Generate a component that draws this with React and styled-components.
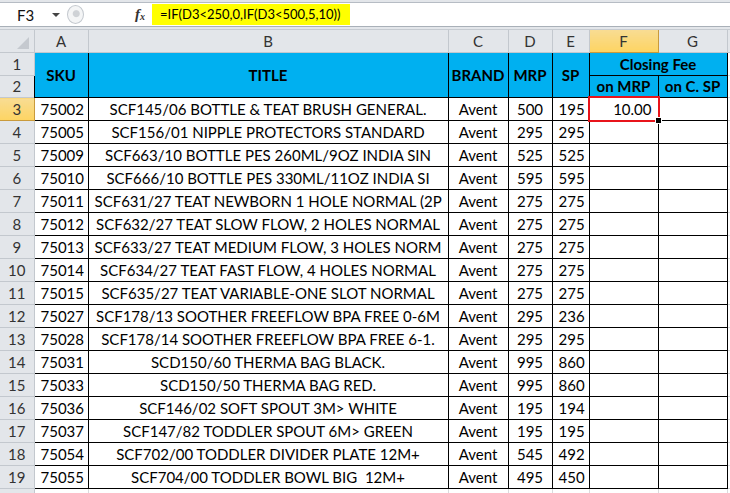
import styled, { createGlobalStyle } from "styled-components"

const rows = [
  [3, "75002", "SCF145/06 BOTTLE & TEAT BRUSH GENERAL.", "500", "195", "10.00"],
  [4, "75005", "SCF156/01 NIPPLE PROTECTORS STANDARD", "295", "295"],
  [5, "75009", "SCF663/10 BOTTLE PES 260ML/9OZ INDIA SIN", "525", "525"],
  [6, "75010", "SCF666/10 BOTTLE PES 330ML/11OZ INDIA SI", "595", "595"],
  [7, "75011", "SCF631/27 TEAT NEWBORN 1 HOLE NORMAL (2P", "275", "275"],
  [8, "75012", "SCF632/27 TEAT SLOW FLOW, 2 HOLES NORMAL", "275", "275"],
  [9, "75013", "SCF633/27 TEAT MEDIUM FLOW, 3 HOLES NORM", "275", "275"],
  [10, "75014", "SCF634/27 TEAT FAST FLOW, 4 HOLES NORMAL", "275", "275"],
  [11, "75015", "SCF635/27 TEAT VARIABLE-ONE SLOT NORMAL", "275", "275"],
  [12, "75027", "SCF178/13 SOOTHER FREEFLOW BPA FREE 0-6M", "295", "236"],
  [13, "75028", "SCF178/14 SOOTHER FREEFLOW BPA FREE 6-1.", "295", "295"],
  [14, "75031", "SCD150/60 THERMA BAG BLACK.", "995", "860"],
  [15, "75033", "SCD150/50 THERMA BAG RED.", "995", "860"],
  [16, "75036", "SCF146/02 SOFT SPOUT 3M> WHITE", "195", "194"],
  [17, "75037", "SCF147/82 TODDLER SPOUT 6M> GREEN", "195", "195"],
  [18, "75054", "SCF702/00 TODDLER DIVIDER PLATE 12M+", "545", "492"],
  [19, "75055", "SCF704/00 TODDLER BOWL BIG  12M+", "495", "450"],
]

const columns = ["A", "B", "C", "D", "E", "F", "G", ""]
const widths = [34, 54, 360, 60, 44, 37, 69, 69, 40]

function App() {
  return (
    <Sheet>
      <GlobalStyle />
      <FormulaArea>
        <FormulaBar>
          <NameBox>
            F3
            <Caret />
          </NameBox>
          <Splitter />
          <Fx>
            f<sub>x</sub>
          </Fx>
          <Formula>=IF(D3&lt;250,0,IF(D3&lt;500,5,10))</Formula>
        </FormulaBar>
      </FormulaArea>

      <Grid>
        <colgroup>
          {widths.map((w, i) => (
            <col key={i} style={{ width: w }} />
          ))}
        </colgroup>
        <thead>
          <tr>
            <Corner>
              <Triangle />
            </Corner>
            {columns.map((c, i) => (
              <ColHead key={i} active={c === "F"}>
                {c}
              </ColHead>
            ))}
          </tr>
        </thead>
        <tbody>
          <HeadRow>
            <RowHead>1</RowHead>
            <Title rowSpan={2}>SKU</Title>
            <Title rowSpan={2}>TITLE</Title>
            <Title rowSpan={2}>BRAND</Title>
            <Title rowSpan={2}>MRP</Title>
            <Title rowSpan={2}>SP</Title>
            <Title colSpan={2}>Closing Fee</Title>
            <Blank />
          </HeadRow>
          <HeadRow>
            <RowHead>2</RowHead>
            <Title>on MRP</Title>
            <Title>on C. SP</Title>
            <Blank />
          </HeadRow>
          {rows.map(([n, sku, title, mrp, sp, fee]) => (
            <Row key={n}>
              <RowHead active={n === 3}>{n}</RowHead>
              <Cell>{sku}</Cell>
              <Cell>{title}</Cell>
              <Cell>Avent</Cell>
              <Cell>{mrp}</Cell>
              <Cell>{sp}</Cell>
              <Cell align="right">
                {fee}
                {fee && (
                  <Selection>
                    <Handle />
                  </Selection>
                )}
              </Cell>
              <Cell />
              <Blank />
            </Row>
          ))}
          <Row>
            <RowHead />
            <Blank />
            <Blank />
            <Blank />
            <Blank />
            <Blank />
            <Blank />
            <Blank />
            <Blank />
          </Row>
        </tbody>
      </Grid>
    </Sheet>
  )
}

const GlobalStyle = createGlobalStyle`
  html, body {
    margin: 0;
    padding: 0;
    background: #ffffff;
    overflow: hidden;
  }
`

const Sheet = styled.div`
  width: 730px;
  height: 493px;
  overflow: hidden;
  font-family: Lato, "Liberation Sans", sans-serif;
  color: #000;
`

const FormulaArea = styled.div`
  height: 30px;
  box-sizing: border-box;
  padding-top: 2px;
  background: #e3e6ea;
  border-bottom: 1px solid #c6cbd1;
`

const FormulaBar = styled.div`
  display: flex;
  align-items: center;
  height: 23px;
  background: #ffffff;
  border-top: 1px solid #b6bcc4;
  border-bottom: 1px solid #a9b0b8;
`

const NameBox = styled.div`
  position: relative;
  width: 67px;
  box-sizing: border-box;
  padding-left: 17px;
  font-size: 15px;
  color: #111;
`

const Caret = styled.span`
  position: absolute;
  left: 52px;
  top: 7px;
  border-left: 4px solid transparent;
  border-right: 4px solid transparent;
  border-top: 4px solid #444;
`

const Splitter = styled.div`
  width: 15px;
  height: 17px;
  border-radius: 50%;
  border: 1px solid #c3c8ce;
  background: radial-gradient(circle at 55% 45%, #cfd2d6 0 3px, #f4f5f6 4px);
`

const Fx = styled.div`
  margin-left: 51px;
  width: 17px;
  font-family: "Liberation Serif", serif;
  font-style: italic;
  font-weight: bold;
  font-size: 15px;
  color: #333;
  sub {
    font-size: 10px;
    vertical-align: -1px;
  }
`

const Formula = styled.div`
  height: 21px;
  width: 198px;
  box-sizing: border-box;
  padding-left: 8px;
  background: #ffff00;
  font-size: 13px;
  line-height: 21px;
  white-space: nowrap;
`

const Grid = styled.table`
  table-layout: fixed;
  border-collapse: collapse;
  width: 767px;
  font-size: 15px;
`

const Corner = styled.th`
  position: relative;
  height: 22px;
  padding: 0;
  background: #e3e6ea;
  border: 1px solid #c3c8ce;
  border-top: none;
  border-left: none;
`

const Triangle = styled.span`
  position: absolute;
  right: 5px;
  bottom: 3px;
  border-left: 12px solid transparent;
  border-bottom: 12px solid #c5c9cf;
`

const ColHead = styled.th`
  height: 22px;
  padding: 0;
  font-weight: normal;
  font-size: 15px;
  color: #333;
  background: ${({ active }) =>
    active ? "linear-gradient(#f8dc93, #fdd462)" : "#e3e6ea"};
  border: 1px solid ${({ active }) => (active ? "#c99a3c" : "#c3c8ce")};
  border-top: none;
`

const RowHead = styled.td`
  padding: 0;
  text-align: center;
  font-size: 15px;
  color: #333;
  background: ${({ active }) =>
    active ? "linear-gradient(#f8dc93, #fdd462)" : "#e3e6ea"};
  border: 1px solid ${({ active }) => (active ? "#c99a3c" : "#c3c8ce")};
  border-left: none;
`

const HeadRow = styled.tr`
  height: 22.5px;
`

const Row = styled.tr`
  height: 23px;
`

const Title = styled.td`
  padding: 0 2px;
  text-align: center;
  font-weight: bold;
  background: #00b0f0;
  border: 1px solid #000;
  white-space: nowrap;
`

const Cell = styled.td`
  position: relative;
  padding: 0 6px;
  text-align: ${({ align }) => align || "center"};
  border: 1px solid #000;
  white-space: pre;
  overflow: visible;
`

const Blank = styled.td`
  border: 1px solid #d9dbdd;
`

const Selection = styled.span`
  position: absolute;
  left: -2px;
  top: -2px;
  right: -2px;
  bottom: -2px;
  border: 2px solid #e8141b;
`

const Handle = styled.span`
  position: absolute;
  right: -4px;
  bottom: -4px;
  width: 5px;
  height: 5px;
  background: #000;
  border: 1px solid #fff;
`

export default App
